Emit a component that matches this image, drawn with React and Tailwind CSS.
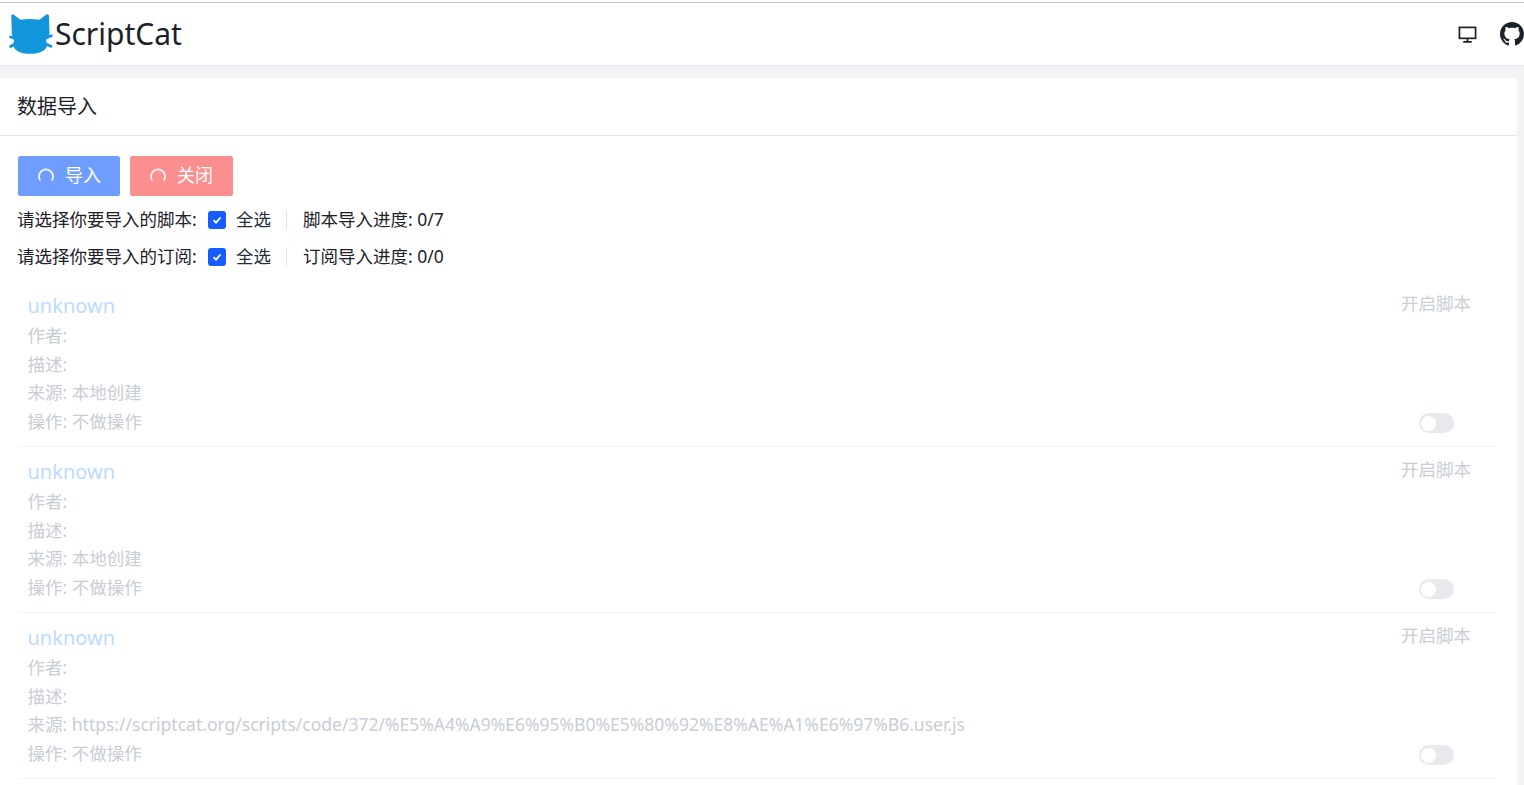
// ScriptCat data import page
const FONT = { fontFamily: '"Noto Sans", "Noto Sans CJK SC", sans-serif' }

const SCRIPTS = [
  { source: '本地创建' },
  { source: '本地创建' },
  { source: 'https://scriptcat.org/scripts/code/372/%E5%A4%A9%E6%95%B0%E5%80%92%E8%AE%A1%E6%97%B6.user.js' },
]

function CatLogo() {
  return (
    <svg className="h-[42px] w-[44px] shrink-0" viewBox="0 0 44 42" fill="#1296db">
      <path d="M2.300 2.800Q2.300 .6 4.500 1.500L11.500 6.800Q21 5.400 30.500 6.800L37.300 1.500Q39.800 .6 40 2.800L40.500 21L37 27.500L38.500 32Q36 40.800 21 40.800Q6 40.800 4 32L5 27.500L2.800 21Z" />
      <path d="M38 24.500L42.300 22.800M38 31.500L41.800 33.300M5 25L1.600 24M5 31.500L1.600 33.500" stroke="#1296db" strokeWidth="2.800" strokeLinecap="round" fill="none" />
    </svg>
  )
}

function MonitorIcon() {
  return (
    <svg className="h-[20px] w-[20px] translate-y-[1px]" viewBox="0 0 20 20" fill="none" stroke="#1d2129" strokeWidth="1.800">
      <rect x="1.500" y="2" width="17" height="11.500" />
      <path d="M10 13.500V17M5.500 17.200H14.500" />
    </svg>
  )
}

function GithubIcon() {
  return (
    <svg className="h-[24px] w-[24px] shrink-0" viewBox="0 0 16 16" fill="#1d2129">
      <path d="M8 0C3.580 0 0 3.580 0 8c0 3.540 2.290 6.530 5.470 7.590.4.070.55-.17.55-.38 0-.19-.01-.82-.01-1.490-2.010.37-2.530-.49-2.690-.94-.09-.23-.48-.94-.82-1.130-.28-.15-.68-.52-.01-.53.63-.01 1.080.58 1.230.82.72 1.210 1.870.87 2.330.66.070-.52.28-.87.51-1.070-1.780-.2-3.640-.89-3.640-3.950 0-.87.31-1.590.82-2.150-.08-.2-.36-1.020.08-2.120 0 0 .67-.21 2.200.82.64-.18 1.320-.27 2-.27s1.360.09 2 .27c1.530-1.040 2.200-.82 2.200-.82.44 1.100.16 1.920.08 2.120.51.560.82 1.270.82 2.150 0 3.070-1.870 3.750-3.650 3.950.29.250.54.730.54 1.480 0 1.070-.01 1.930-.01 2.200 0 .21.150.46.55.38A8.010 8.010 0 0 0 16 8c0-4.420-3.580-8-8-8z" />
    </svg>
  )
}

function Spinner() {
  return (
    <svg className="h-[16px] w-[16px]" viewBox="0 0 16 16" fill="none" stroke="#fff" strokeWidth="1.800" opacity="0.9">
      <path d="M2.300 12.500A7 7 0 1 1 13.700 12.500" strokeLinecap="butt" />
    </svg>
  )
}

function LoadingButton({ color, width, children }) {
  return (
    <button className={`flex h-[40px] items-center gap-[11px] rounded-[2.500px] pl-[20px] text-[18px] leading-[38px] text-white ${color} ${width}`}>
      <Spinner />
      <span className="-translate-y-[1px]">{children}</span>
    </button>
  )
}

function SelectRow({ label, progress }) {
  return (
    <div className="flex h-[37px] items-center text-[#1d2129]">
      <span className="-ml-[1px] w-[191px]">{label}</span>
      <span className="flex h-[18px] w-[18px] items-center justify-center rounded-[3px] bg-[#165dff]">
        <svg className="h-[12px] w-[12px]" viewBox="0 0 12 12" fill="none" stroke="#fff" strokeWidth="1.800">
          <path d="M2.500 6.200L5 8.600L9.500 3.500" />
        </svg>
      </span>
      <span className="ml-[10px] w-[50px] text-[#272e3b]">全选</span>
      <span className="h-[18px] w-px bg-[#e5e6eb]" />
      <span className="ml-[16px]">{progress}</span>
    </div>
  )
}

function ScriptRow({ source }) {
  return (
    <div className="flex h-[166px] justify-between border-b border-[#f2f3f5] pl-[9.500px] pr-[25px] text-[17.500px] leading-[28.700px] text-[#c9cdd4]">
      <div className="pt-[10px]">
        <div className="text-[20px] leading-[30px] text-[#bedaff]">unknown</div>
        <div>作者:</div>
        <div>描述:</div>
        <div>来源: {source}</div>
        <div>操作: 不做操作</div>
      </div>
      <div className="flex flex-col items-center justify-between pb-[13px] pt-[8px]">
        <span>开启脚本</span>
        <span className="flex h-[20px] w-[35px] items-center rounded-full bg-[#e8e9ed] pl-[2.500px]">
          <span className="h-[15px] w-[15px] rounded-full bg-white" />
        </span>
      </div>
    </div>
  )
}

export default function App() {
  return (
    <div className="flex h-[785px] flex-col overflow-hidden bg-[#f2f3f5]" style={FONT}>
      <div className="h-[2px] bg-white" />
      <div className="h-px bg-[#c4c4c4]" />
      <header className="flex h-[63px] items-center justify-between border-b border-[#e5e6eb] bg-white pl-[9px]">
        <div className="flex items-center gap-[2px]">
          <CatLogo />
          <span className="text-[30px] leading-[40px] text-[#1d2129]">ScriptCat</span>
        </div>
        <div className="flex w-[66px] items-center gap-[23px]">
          <MonitorIcon />
          <GithubIcon />
        </div>
      </header>

      <main className="mt-[12px] mr-[7px] flex-1 bg-white">
        <div className="flex h-[58px] items-center border-b border-[#e5e6eb] pl-[17px] text-[20px] text-[#1d2129]">
          数据导入
        </div>
        <div className="px-[18px] pt-[20px] text-[17.500px]">
          <div className="flex gap-[10px]">
            <LoadingButton color="bg-[#6e9dff]" width="w-[102px]">导入</LoadingButton>
            <LoadingButton color="bg-[#fb8e8e]" width="w-[103px]">关闭</LoadingButton>
          </div>
          <div className="mt-[5px]">
            <SelectRow label="请选择你要导入的脚本:" progress="脚本导入进度: 0/7" />
            <SelectRow label="请选择你要导入的订阅:" progress="订阅导入进度: 0/0" />
          </div>
          <div className="mt-[6px] mr-[3px]">
            {SCRIPTS.map((s, i) => (
              <ScriptRow key={i} source={s.source} />
            ))}
          </div>
        </div>
      </main>
    </div>
  )
}
